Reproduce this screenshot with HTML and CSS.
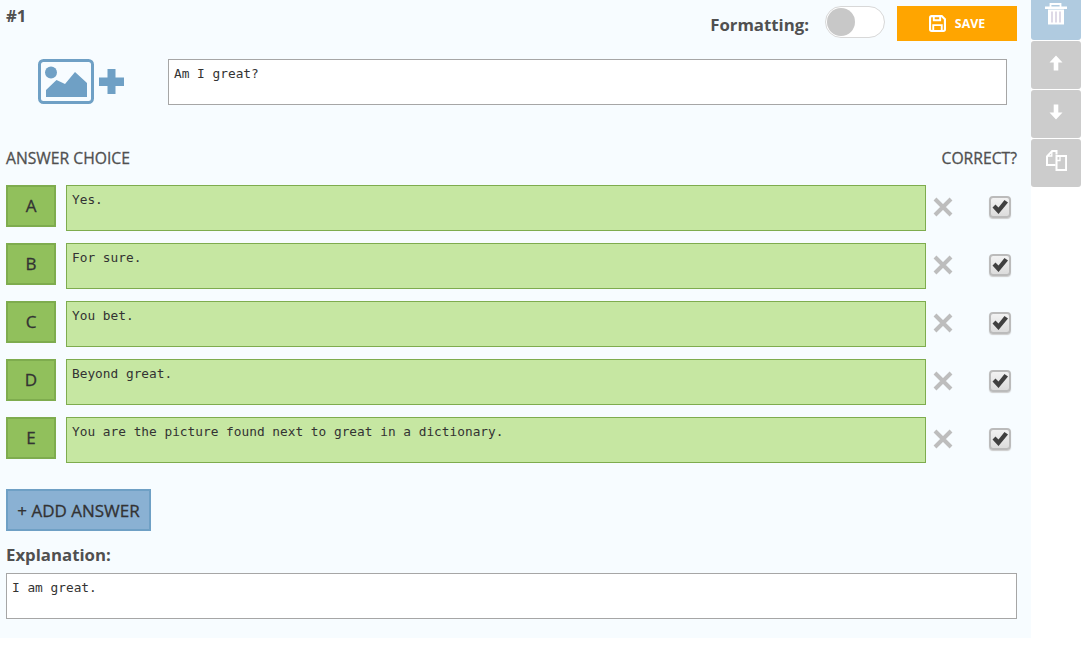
FILE: index.html
```html
<!DOCTYPE html>
<html lang="en">
<head>
<meta charset="utf-8">
<title>Question editor</title>
<link rel="stylesheet" href="styles.css">
</head>
<body>
<div class="page">
  <main class="panel">
    <div class="toprow">
      <div class="num">#1</div>
      <div class="format">
        <span class="format-label">Formatting:</span>
        <span class="toggle"><span class="knob"></span></span>
        <button class="save">
          <svg class="save-icon" viewBox="0 0 16 16" width="17" height="17"><path d="M2.500 1h9.500l3 3v9.500a1.500 1.500 0 0 1-1.500 1.500h-11A1.500 1.500 0 0 1 1 13.500v-11A1.500 1.500 0 0 1 2.500 1z" fill="none" stroke="#fff" stroke-width="2"/><path d="M4.500 1.500v3.500h6V1.500M4 15V9.500h8V15" fill="none" stroke="#fff" stroke-width="1.800"/></svg>
          <span>SAVE</span>
        </button>
      </div>
    </div>
    <div class="question">
      <svg class="add-image" viewBox="0 0 88 46" width="88" height="46">
        <rect x="1.500" y="1.500" width="53" height="42" rx="4" fill="none" stroke="#6fa0c5" stroke-width="3"/>
        <circle cx="13" cy="13.500" r="6" fill="#6fa0c5"/>
        <path d="M8 38V31l10.500-10 8.500 4 10-12 12 11v14z" fill="#6fa0c5"/>
        <path d="M69.500 10h8v8.500H86v8.500h-8.500V35h-8v-8H61v-8.500h8.500z" fill="#6fa0c5"/>
      </svg>
      <textarea class="field question-field" readonly>Am I great?</textarea>
    </div>
    <div class="heads">
      <span>ANSWER CHOICE</span>
      <span>CORRECT?</span>
    </div>
    <div class="answers">
      <div class="answer">
        <div class="letter">A</div>
        <textarea class="field answer-field" readonly>Yes.</textarea>
        <svg class="remove" viewBox="0 0 22 22" width="22" height="22"><path d="M3 3l16 16M19 3L3 19" stroke="#bdbdbd" stroke-width="4"/></svg>
        <span class="check"><svg viewBox="0 0 18 18" width="18" height="18"><path d="M1.500 9.500L4.500 6.500 7.500 9.500 13.500 2l3.500 2.500L7.500 16z" fill="#404040"/></svg></span>
      </div>
      <div class="answer">
        <div class="letter">B</div>
        <textarea class="field answer-field" readonly>For sure.</textarea>
        <svg class="remove" viewBox="0 0 22 22" width="22" height="22"><path d="M3 3l16 16M19 3L3 19" stroke="#bdbdbd" stroke-width="4"/></svg>
        <span class="check"><svg viewBox="0 0 18 18" width="18" height="18"><path d="M1.500 9.500L4.500 6.500 7.500 9.500 13.500 2l3.500 2.500L7.500 16z" fill="#404040"/></svg></span>
      </div>
      <div class="answer">
        <div class="letter">C</div>
        <textarea class="field answer-field" readonly>You bet.</textarea>
        <svg class="remove" viewBox="0 0 22 22" width="22" height="22"><path d="M3 3l16 16M19 3L3 19" stroke="#bdbdbd" stroke-width="4"/></svg>
        <span class="check"><svg viewBox="0 0 18 18" width="18" height="18"><path d="M1.500 9.500L4.500 6.500 7.500 9.500 13.500 2l3.500 2.500L7.500 16z" fill="#404040"/></svg></span>
      </div>
      <div class="answer">
        <div class="letter">D</div>
        <textarea class="field answer-field" readonly>Beyond great.</textarea>
        <svg class="remove" viewBox="0 0 22 22" width="22" height="22"><path d="M3 3l16 16M19 3L3 19" stroke="#bdbdbd" stroke-width="4"/></svg>
        <span class="check"><svg viewBox="0 0 18 18" width="18" height="18"><path d="M1.500 9.500L4.500 6.500 7.500 9.500 13.500 2l3.500 2.500L7.500 16z" fill="#404040"/></svg></span>
      </div>
      <div class="answer">
        <div class="letter">E</div>
        <textarea class="field answer-field" readonly>You are the picture found next to great in a dictionary.</textarea>
        <svg class="remove" viewBox="0 0 22 22" width="22" height="22"><path d="M3 3l16 16M19 3L3 19" stroke="#bdbdbd" stroke-width="4"/></svg>
        <span class="check"><svg viewBox="0 0 18 18" width="18" height="18"><path d="M1.500 9.500L4.500 6.500 7.500 9.500 13.500 2l3.500 2.500L7.500 16z" fill="#404040"/></svg></span>
      </div>
    </div>
    <button class="add">+ ADD ANSWER</button>
    <div class="explain-label">Explanation:</div>
    <textarea class="field explain-field" readonly>I am great.</textarea>
  </main>
  <aside class="side">
    <button class="tool tool-delete">
      <svg viewBox="0 0 22 22" width="22" height="22"><path d="M0 3.500h22V6H0z" fill="#fff"/><path d="M5.500 4V1h10v3" fill="none" stroke="#fff" stroke-width="1.800"/><path d="M3 6.500h16V21.500H3z" fill="#fff"/><path d="M7 8.500v11M11 8.500v11M15 8.500v11" stroke="#c9c2d8" stroke-width="1.200"/></svg>
    </button>
    <button class="tool tool-arrow-up">
      <svg viewBox="0 0 14 16" width="14" height="16"><path d="M7 .500L13.500 7.500H9.300V15.500H4.700V7.500H.500z" fill="#fff"/></svg>
    </button>
    <button class="tool tool-arrow-down">
      <svg viewBox="0 0 14 16" width="14" height="16"><path d="M7 15.500L13.500 8.500H9.300V.500H4.700V8.500H.500z" fill="#fff"/></svg>
    </button>
    <button class="tool tool-copy">
      <svg viewBox="0 0 21 21" width="21" height="21"><path d="M10.500 4.500V1H6.200L1 6.300V15h8.500" fill="none" stroke="#fff" stroke-width="2"/><path d="M5.800 1.500V6H1.500" fill="none" stroke="#fff" stroke-width="1.300"/><path d="M10.500 5.900h9.600V20.100H10.500z" fill="none" stroke="#fff" stroke-width="2"/><path d="M14 6v4.500H10.500" fill="none" stroke="#fff" stroke-width="1.300"/></svg>
    </button>
  </aside>
</div>
</body>
</html>
```

FILE: styles.css
```css
* { box-sizing: border-box; }
html, body { margin: 0; padding: 0; background: #fff; }
body { font-family: "Open Sans", "Liberation Sans", sans-serif; color: #505050; }
.page { display: flex; width: 1082px; height: 660px; overflow: hidden; align-items: flex-start; }
.panel { width: 1031px; height: 638px; background: #f7fcff; padding: 6px 14px 0 6px; }
.toprow { display: flex; justify-content: space-between; height: 35px; }
.num { font-size: 16.8px; font-weight: 700; line-height: 20px; }
.format { display: flex; align-items: flex-start; }
.format-label { font-size: 16.8px; font-weight: 700; line-height: 38px; margin-right: 16px; }
.toggle { display: block; width: 60px; height: 32px; border-radius: 16px; border: 1px solid #d8d8d8; background: #fff; padding: 1px; margin-right: 12px; }
.knob { display: block; width: 28px; height: 28px; border-radius: 50%; background: #c8c8c8; }
.save { display: flex; align-items: center; justify-content: center; gap: 9px; width: 120px; height: 35px; border: 0; background: #ffa500; color: #fff; font: 700 12.4px "Open Sans", sans-serif; padding: 0; }
.save-icon { display: block; }
.question { display: flex; align-items: flex-start; margin-top: 18px; padding-right: 10px; }
.add-image { display: block; margin-left: 32px; margin-right: 42px; flex: none; }
.field { display: block; resize: none; outline: 0; overflow: hidden; height: 46px; border: 1px solid #a6a6a6; background: #fff; color: #333; font: 12.8px/16px "DejaVu Sans Mono", monospace; padding: 6px 5px 5px; margin: 0; }
.question-field { flex: 1; }
.heads { display: flex; justify-content: space-between; margin-top: 43px; font-size: 15.7px; font-weight: 400; line-height: 20px; -webkit-text-stroke: 0.3px #505050; }
.answers { margin-top: 17px; }
.answer { display: flex; align-items: flex-start; height: 46px; margin-bottom: 12px; }
.letter { flex: none; width: 50px; height: 42px; background: #91c05c; border: 2px solid #7eac4e; color: #333; font-size: 17px; font-weight: 400; line-height: 38px; text-align: center; margin-right: 10px; -webkit-text-stroke: 0.3px #333; }
.answer-field { width: 860px; background: #c6e7a2; border-color: #7eac4e; flex: none; }
.remove { flex: none; margin: 11px 0 0 6px; }
.check { flex: none; display: flex; align-items: center; justify-content: center; width: 22px; height: 22px; margin: 11px 0 0 35px; border: 2px solid #bbb; border-radius: 4px; background: linear-gradient(#f2f2f2, #dcdcdc); box-shadow: 0 1px 1px #ccc; }
.add { display: block; width: 145px; height: 42px; margin-top: 26px; background: #8ab1d3; border: 2px solid #6fa0c5; color: #333; font: 400 17px "Open Sans", sans-serif; padding: 0; -webkit-text-stroke: 0.3px #333; }
.explain-label { font-size: 16.8px; font-weight: 700; line-height: 22px; margin-top: 13px; }
.explain-field { width: 1011px; margin-top: 7px; }
.side { width: 50px; display: flex; flex-direction: column; }
.tool { display: flex; align-items: center; justify-content: center; width: 50px; height: 48px; margin-bottom: 1px; border: 0; border-radius: 3px; background: #ccc; padding: 0; }
.tool-delete { height: 40px; background: #b0cbe0; border-radius: 0 0 3px 3px; padding-bottom: 13px; }
.tool-arrow-up { padding-bottom: 5px; }
.tool-arrow-down { padding-bottom: 5px; }
.tool-copy { padding-bottom: 5px; }
```
